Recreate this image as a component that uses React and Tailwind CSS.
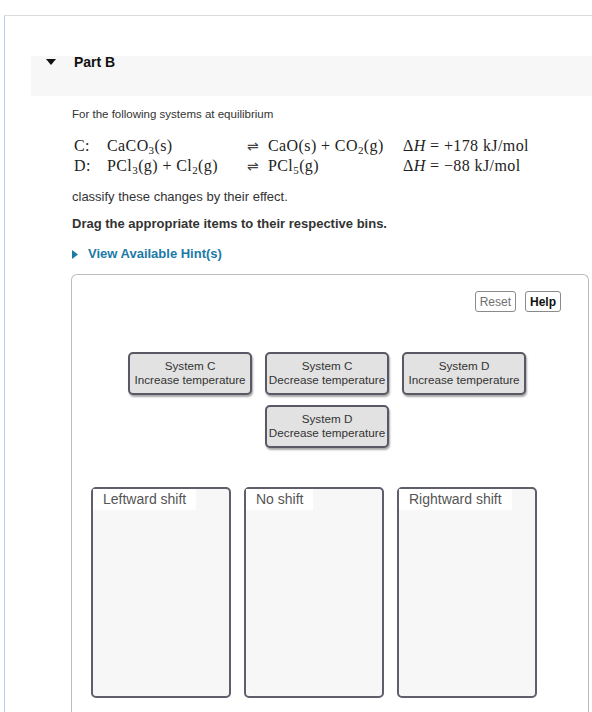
const items = [
  { system: 'System C', change: 'Increase temperature' },
  { system: 'System C', change: 'Decrease temperature' },
  { system: 'System D', change: 'Increase temperature' },
  { system: 'System D', change: 'Decrease temperature' },
]

const bins = ['Leftward shift', 'No shift', 'Rightward shift']

function Sub({ children }) {
  return <sub className="text-[11px]">{children}</sub>
}

function Equations() {
  return (
    <div
      className="ml-[3px] mt-[14px] grid grid-cols-[33px_140px_21px_135px_auto] text-[16px] leading-[20px] tracking-[0.4px] text-[#222]"
      style={{ fontFamily: '"Liberation Serif", "DejaVu Serif", serif' }}
    >
      <span>C:</span>
      <span>
        CaCO<Sub>3</Sub>(s)
      </span>
      <span className="font-['DejaVu_Sans'] text-[14px] text-[#444]">⇌</span>
      <span>
        CaO(s) + CO<Sub>2</Sub>(g)
      </span>
      <span>
        Δ<i>H</i> = +178 kJ/mol
      </span>

      <span>D:</span>
      <span>
        PCl<Sub>3</Sub>(g) + Cl<Sub>2</Sub>(g)
      </span>
      <span className="font-['DejaVu_Sans'] text-[14px] text-[#444]">⇌</span>
      <span>
        PCl<Sub>5</Sub>(g)
      </span>
      <span>
        Δ<i>H</i> = −88 kJ/mol
      </span>
    </div>
  )
}

export default function App() {
  return (
    <div className="min-h-[712px] bg-white pt-[15px] font-['Liberation_Sans',Arial,sans-serif] text-[13px] text-[#333]">
      <div className="ml-[4px] min-h-[697px] border-t border-l border-t-[#dcdcdc] border-l-[#b9d1e8] pt-[40px]">
        {/* part header */}
        <div className="ml-[26px] flex h-[40px] items-start bg-[#f7f7f7] pl-[15px]">
          <svg width="10" height="6" viewBox="0 0 10 6" className="mt-[3px]">
            <path d="M0 0h10L5 6z" fill="#111" />
          </svg>
          <span className="ml-[18px] -mt-[2px] text-[14px] font-bold leading-[16px] text-[#111]">
            Part B
          </span>
        </div>

        <div className="pl-[66px] pr-[3px]">
          <p className="ml-[1px] mt-[10px] text-[11.5px] leading-[16px]">
            For the following systems at equilibrium
          </p>

          <Equations />

          <p className="ml-[1px] mt-[13px] leading-[16px]">
            classify these changes by their effect.
          </p>
          <p className="ml-[1px] mt-[11px] font-bold leading-[16px]">
            Drag the appropriate items to their respective bins.
          </p>

          <div className="ml-[1px] mt-[14px] flex items-center gap-[10px] font-bold leading-[16px] text-[#1b7aa6]">
            <svg width="6" height="9" viewBox="0 0 6 9">
              <path d="M0 0l6 4.5L0 9z" fill="#1b7aa6" />
            </svg>
            <span>View Available Hint(s)</span>
          </div>

          {/* drag and drop area */}
          <div className="mt-[12px] h-[460px] rounded-t-[6px] border border-b-0 border-[#bdbdbd] pt-[16px]">
            <div className="flex justify-end gap-[9px] pr-[27px]">
              <button className="h-[21px] rounded-[3px] border border-[#8a8a8a] px-[4px] text-[12px] text-[#6f6f6f]">
                Reset
              </button>
              <button className="h-[21px] rounded-[3px] border border-[#8a8a8a] px-[4px] text-[12px] font-bold text-[#111]">
                Help
              </button>
            </div>

            <div className="ml-[56px] mt-[40px] flex w-[398px] flex-wrap justify-center gap-x-[13px] gap-y-[10px]">
              {items.map((item, i) => (
                <div
                  key={i}
                  className="flex h-[43px] w-[124px] flex-col items-center justify-center rounded-[5px] border-2 border-[#595966] bg-[#e2e2e2] pb-[2px] text-[11.7px] leading-[14px] text-[#333] shadow-[1px_2px_2px_rgba(0,0,0,0.35)]"
                >
                  <span>{item.system}</span>
                  <span className="whitespace-nowrap">{item.change}</span>
                </div>
              ))}
            </div>

            <div className="mt-[39px] flex gap-[13px] pl-[19px]">
              {bins.map((label) => (
                <div
                  key={label}
                  className="h-[211px] w-[140px] rounded-[5px] border-2 border-[#5f5f6b] bg-[#f7f7f7]"
                >
                  <div className="inline-block bg-white px-[10px] pt-[2px] pb-[3px] text-[14px] leading-[16px] text-[#555]">
                    {label}
                  </div>
                </div>
              ))}
            </div>
          </div>
        </div>
      </div>
    </div>
  )
}
